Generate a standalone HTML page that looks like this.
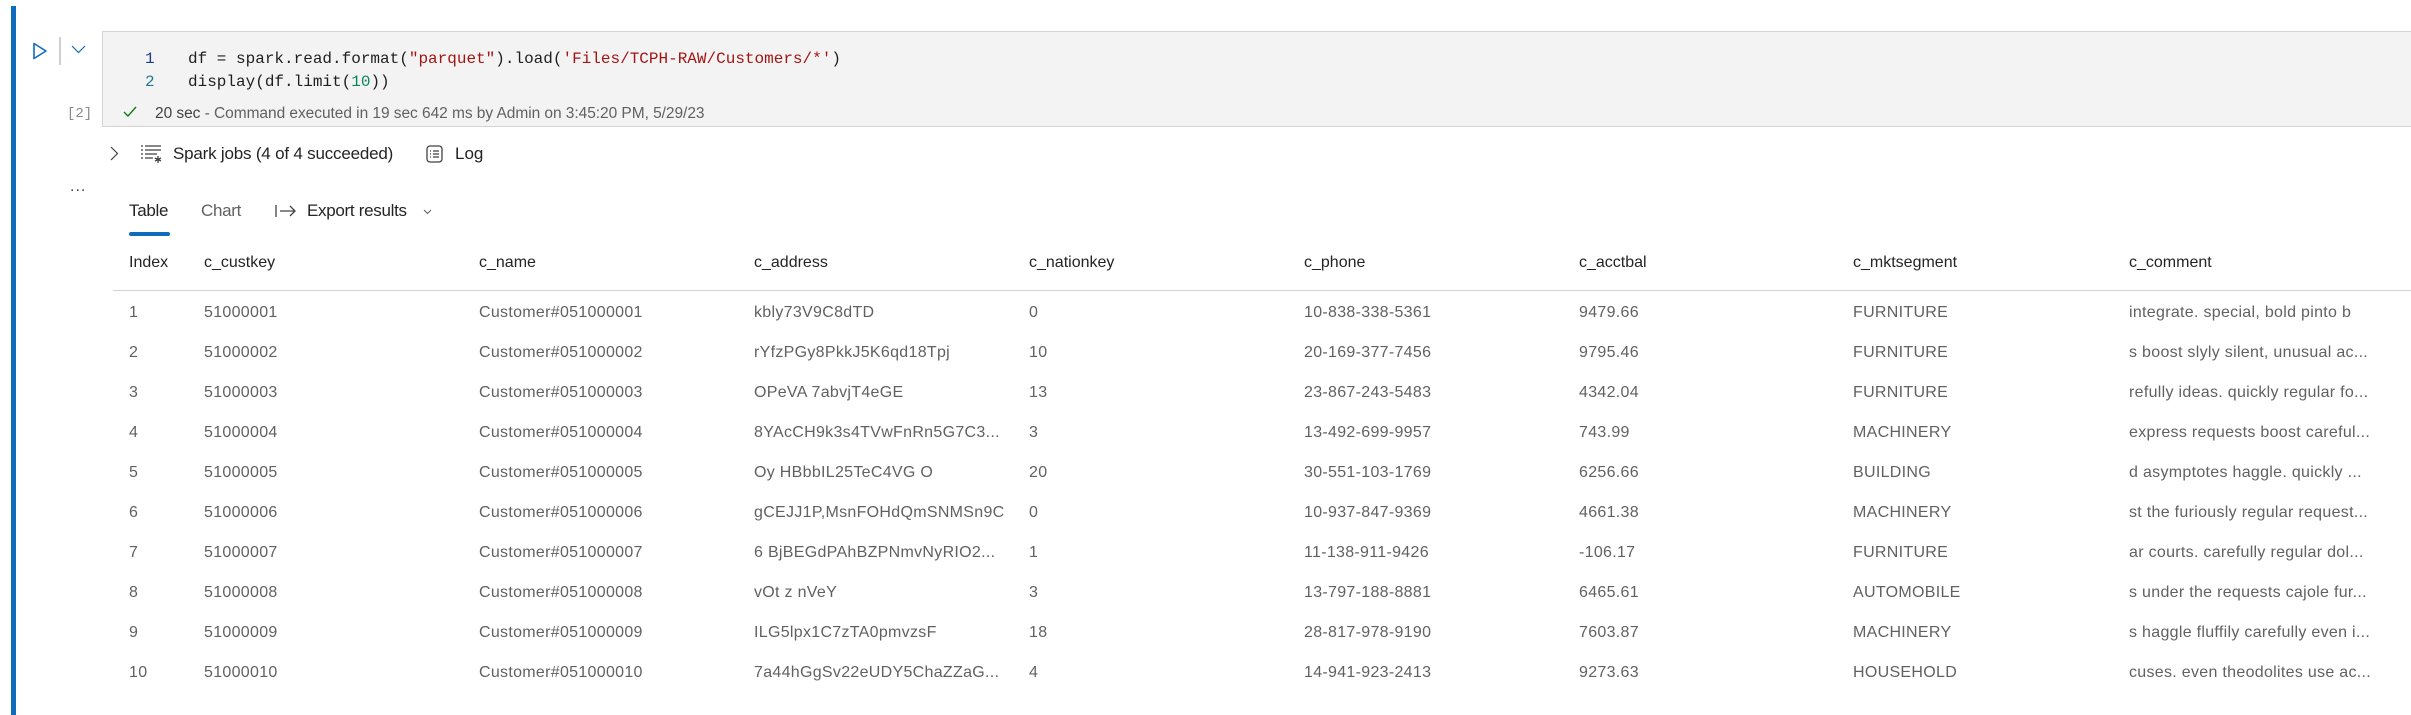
<!DOCTYPE html>
<html><head><meta charset="utf-8"><style>
*{margin:0;padding:0;box-sizing:border-box}
body{width:2411px;height:715px;background:#fff;position:relative;overflow:hidden;font-family:"Liberation Sans",sans-serif;}
.a{position:absolute;white-space:nowrap}
.mono{font-family:"Liberation Mono",monospace;font-size:16px;color:#1f1f1f}
.t{font-size:16px;color:#616161;letter-spacing:0.3px}
.h{font-size:16px;color:#242424;letter-spacing:0px}
</style></head><body>
<div class="a" style="left:11px;top:6px;width:5px;height:709px;background:#0f6cbd"></div>
<svg class="a" style="left:32px;top:42px" width="16" height="18" viewBox="0 0 16 18"><path d="M2 1.5 L14 9 L2 16.5 Z" fill="none" stroke="#0f6cbd" stroke-width="1.6" stroke-linejoin="round"/></svg>
<div class="a" style="left:59px;top:37px;width:2px;height:28px;background:#d0d0d0"></div>
<svg class="a" style="left:71px;top:45px" width="15" height="9" viewBox="0 0 15 9"><path d="M1 1 L7.5 7.5 L14 1" fill="none" stroke="#0f6cbd" stroke-width="1.2"/></svg>
<div class="a" style="left:102px;top:31px;width:2309px;height:96px;background:#f3f3f3;border:1px solid #d4d4d4;border-right:none"></div>
<div class="a mono" style="left:145px;top:50px;color:#1e3a8a">1</div>
<div class="a mono" style="left:145px;top:73px;color:#237893">2</div>
<div class="a mono" style="left:188px;top:50px">df = spark.read.format(<span style="color:#a31515">"parquet"</span>).load(<span style="color:#a31515">'Files/TCPH-RAW/Customers/*'</span>)</div>
<div class="a mono" style="left:188px;top:73px">display(df.limit(<span style="color:#098658">10</span>))</div>
<div class="a" style="left:67px;top:106px;font-size:14px;color:#8a8a8a;font-family:'Liberation Mono',monospace">[2]</div>
<svg class="a" style="left:123px;top:106px" width="14" height="12" viewBox="0 0 14 12"><path d="M1 6 L5 10 L13 1" fill="none" stroke="#107c10" stroke-width="1.4"/></svg>
<div class="a" style="left:155px;top:105px;font-size:15.5px;color:#616161;letter-spacing:-0.05px"><span style="color:#424242">20 sec</span> - Command executed in 19 sec 642 ms by Admin on 3:45:20 PM, 5/29/23</div>
<svg class="a" style="left:110px;top:146px" width="9" height="15" viewBox="0 0 9 15"><path d="M1 1 L7.5 7.5 L1 14" fill="none" stroke="#424242" stroke-width="1.2"/></svg>
<svg class="a" style="left:141px;top:144px" width="22" height="20" viewBox="0 0 22 20"><g stroke="#424242" stroke-width="1.3"><path d="M0 2H2M4 2H20M0 6H2M4 6H20M0 10H2M4 10H16M0 14H2M4 14H12"/><path d="M17 12V19M14 14L20 17M20 14L14 17"/></g></svg>
<div class="a" style="left:173px;top:144px;font-size:17px;color:#242424;letter-spacing:-0.2px">Spark jobs (4 of 4 succeeded)</div>
<svg class="a" style="left:426px;top:145px" width="17" height="18" viewBox="0 0 17 18"><rect x="1" y="1" width="15" height="16" rx="3" fill="none" stroke="#424242" stroke-width="1.3"/><path d="M4 6H5M4 9H5M4 12H5M7 6H13M7 9H13M7 12H13" stroke="#424242" stroke-width="1.3"/></svg>
<div class="a" style="left:455px;top:144px;font-size:17px;color:#242424">Log</div>
<div class="a" style="left:70px;top:178px;font-size:16px;color:#424242;letter-spacing:1px">...</div>
<div class="a" style="left:129px;top:201px;font-size:17px;color:#242424;letter-spacing:-0.3px">Table</div>
<div class="a" style="left:129px;top:232px;width:41px;height:4px;border-radius:2px;background:#0f6cbd"></div>
<div class="a" style="left:201px;top:201px;font-size:17px;color:#616161;letter-spacing:-0.3px">Chart</div>
<svg class="a" style="left:275px;top:203px" width="22" height="16" viewBox="0 0 22 16"><path d="M1 2V14M5 8H20M15 3L20 8L15 13" fill="none" stroke="#424242" stroke-width="1.3"/></svg>
<div class="a" style="left:307px;top:201px;font-size:17px;color:#242424;letter-spacing:-0.3px">Export results</div>
<svg class="a" style="left:423px;top:209px" width="9" height="6" viewBox="0 0 9 6"><path d="M1 1L4.5 4.5L8 1" fill="none" stroke="#616161" stroke-width="1"/></svg>
<div class="a" style="left:113px;top:290px;width:2298px;height:1px;background:#d1d1d1"></div>
<div id="tbl"></div>
<script>
const cols=[129,204,479,754,1029,1304,1579,1853,2129];
const head=["Index","c_custkey","c_name","c_address","c_nationkey","c_phone","c_acctbal","c_mktsegment","c_comment"];
const rows=[
["1","51000001","Customer#051000001","kbly73V9C8dTD","0","10-838-338-5361","9479.66","FURNITURE","integrate. special, bold pinto b"],
["2","51000002","Customer#051000002","rYfzPGy8PkkJ5K6qd18Tpj","10","20-169-377-7456","9795.46","FURNITURE","s boost slyly silent, unusual ac..."],
["3","51000003","Customer#051000003","OPeVA 7abvjT4eGE","13","23-867-243-5483","4342.04","FURNITURE","refully ideas. quickly regular fo..."],
["4","51000004","Customer#051000004","8YAcCH9k3s4TVwFnRn5G7C3...","3","13-492-699-9957","743.99","MACHINERY","express requests boost careful..."],
["5","51000005","Customer#051000005","Oy HBbbIL25TeC4VG O","20","30-551-103-1769","6256.66","BUILDING","d asymptotes haggle. quickly ..."],
["6","51000006","Customer#051000006","gCEJJ1P,MsnFOHdQmSNMSn9C","0","10-937-847-9369","4661.38","MACHINERY","st the furiously regular request..."],
["7","51000007","Customer#051000007","6 BjBEGdPAhBZPNmvNyRIO2...","1","11-138-911-9426","-106.17","FURNITURE","ar courts. carefully regular dol..."],
["8","51000008","Customer#051000008","vOt z nVeY","3","13-797-188-8881","6465.61","AUTOMOBILE","s under the requests cajole fur..."],
["9","51000009","Customer#051000009","ILG5lpx1C7zTA0pmvzsF","18","28-817-978-9190","7603.87","MACHINERY","s haggle fluffily carefully even i..."],
["10","51000010","Customer#051000010","7a44hGgSv22eUDY5ChaZZaG...","4","14-941-923-2413","9273.63","HOUSEHOLD","cuses. even theodolites use ac..."]];
let h="";
head.forEach((t,i)=>h+=`<div class="a h" style="left:${cols[i]}px;top:254px">${t}</div>`);
rows.forEach((r,j)=>r.forEach((t,i)=>h+=`<div class="a t" style="left:${cols[i]}px;top:${304+j*40}px">${t}</div>`));
document.getElementById("tbl").innerHTML=h;
</script>
</body></html>
